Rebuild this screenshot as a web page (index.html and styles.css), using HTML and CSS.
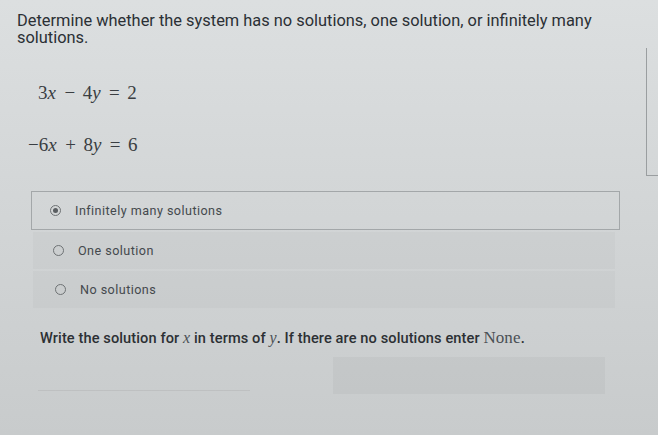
FILE: index.html
```html
<!DOCTYPE html>
<html>
<head>
<meta charset="utf-8">
<link rel="stylesheet" href="styles.css">
</head>
<body>
<div class="page">
  <main class="main">
    <p class="prompt">Determine whether the system has no solutions, one solution, or infinitely many solutions.</p>
    <div class="eqs">
      <div class="eq eq1"><span class="n">3</span><i>x</i><span class="op">−</span><span class="n">4</span><i>y</i><span class="op">=</span><span class="n">2</span></div>
      <div class="eq eq2"><span class="n">−6</span><i>x</i><span class="op">+</span><span class="n">8</span><i>y</i><span class="op">=</span><span class="n">6</span></div>
    </div>
    <div class="options">
      <div class="option selected"><span class="radio"><span class="dot"></span></span><span class="label">Infinitely many solutions</span></div>
      <div class="option shaded o2"><span class="radio"></span><span class="label">One solution</span></div>
      <div class="option shaded o3"><span class="radio"></span><span class="label">No solutions</span></div>
    </div>
    <p class="ask">Write the solution for <i class="m">x</i> in terms of <i class="m">y</i>. If there are no solutions enter <span class="m up">None</span>.</p>
    <div class="answers">
      <div class="line-input"></div>
      <div class="box-input"></div>
    </div>
  </main>
  <aside class="side"></aside>
</div>
</body>
</html>
```
FILE: styles.css
```css
html, body {
  margin: 0;
  padding: 0;
}
body {
  width: 658px;
  height: 435px;
  overflow: hidden;
  background: linear-gradient(180deg, #dcdfe0 0%, #d3d6d7 45%, #c8cbcc 100%);
  font-family: Roboto, "Liberation Sans", sans-serif;
}
.page {
  display: flex;
  height: 435px;
}
.main {
  width: 646px;
  flex: none;
}
.side {
  flex: 1;
  margin-top: 48px;
  height: 127px;
  border-left: 1px solid #9a9ea0;
  border-bottom: 1px solid #9a9ea0;
}
.prompt {
  margin: 12px 0 0 17px;
  width: 610px;
  font-size: 16.4px;
  line-height: 17px;
  color: #2b3035;
}
.eqs {
  margin-top: 35px;
}
.eq {
  font-family: "Liberation Serif", serif;
  font-size: 19px;
  color: #3a3e42;
  height: 24px;
  line-height: 24px;
}
.eq i {
  font-style: italic;
  margin-right: 1px;
}
.eq .op {
  margin: 0 7.5px;
}
.eq1 {
  margin-left: 38px;
}
.eq2 {
  margin-left: 28px;
  margin-top: 28px;
}
.options {
  margin-top: 34px;
  margin-left: 31px;
  width: 589px;
}
.option {
  box-sizing: border-box;
  display: flex;
  align-items: center;
  font-size: 12.6px;
  color: #44494d;
  letter-spacing: 0.45px;
}
.option.selected {
  height: 39px;
  border: 1px solid #a3a7a9;
  padding-left: 18px;
}
.option.shaded {
  height: 37px;
  background: rgba(0, 0, 0, 0.025);
  width: 582px;
  margin-left: 2px;
  margin-top: 2px;
}
.o2 {
  padding-left: 20px;
}
.o3 {
  padding-left: 22px;
}
.radio {
  width: 9px;
  height: 9px;
  border: 1.5px solid #6e7274;
  border-radius: 50%;
  display: flex;
  align-items: center;
  justify-content: center;
  margin-right: 14px;
  flex: none;
}
.dot {
  width: 5px;
  height: 5px;
  border-radius: 50%;
  background: #5a5e61;
}
.ask {
  margin: 20px 0 0 40px;
  font-size: 14.6px;
  font-weight: 500;
  color: #2c3034;
  letter-spacing: 0.1px;
}
.m {
  font-family: "Liberation Serif", serif;
  font-weight: normal;
  font-size: 16px;
  color: #4a4f55;
}
.up {
  font-style: normal;
  font-size: 17px;
}
.answers {
  display: flex;
  margin-top: 9px;
  margin-left: 38px;
  align-items: flex-start;
}
.line-input {
  width: 212px;
  height: 33px;
  border-bottom: 1px solid rgba(0, 0, 0, 0.06);
}
.box-input {
  margin-left: 83px;
  width: 272px;
  height: 37px;
  background: rgba(0, 0, 0, 0.03);
}
```
